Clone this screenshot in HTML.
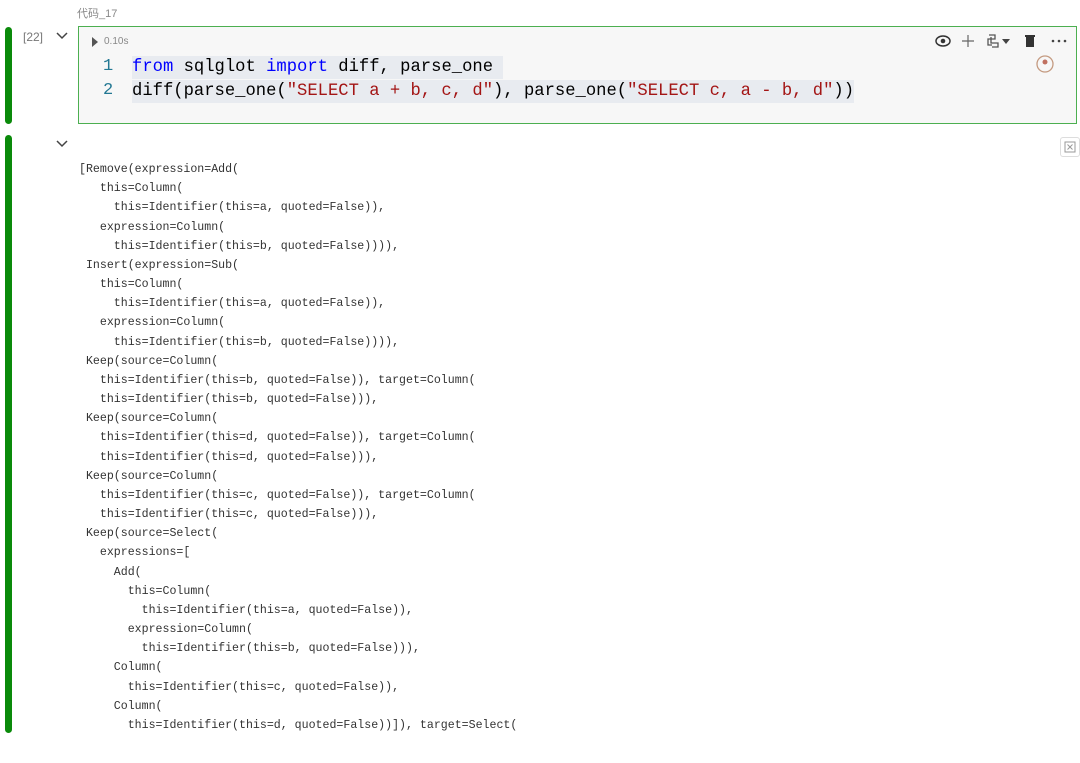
<!DOCTYPE html>
<html><head><meta charset="utf-8"><style>
body{margin:0;width:1080px;height:763px;background:#fff;position:relative;overflow:hidden;font-family:"Liberation Sans","Noto Sans CJK SC",sans-serif}
.abs{position:absolute}
.bar{position:absolute;left:5px;width:7px;background:#0a8a0a;border-radius:4px}
.code{position:absolute;left:78px;top:26px;width:997px;height:96px;border:1px solid #4caf50;background:#f7f7f7}
.ln{position:absolute;font-family:"Liberation Mono",monospace;font-size:17px;color:#237893}
.src{position:absolute;left:132px;font-family:"Liberation Mono",monospace;font-size:17.2px;color:#000;background:#e8ebf0;white-space:pre;line-height:23px}
.kw{color:#0000ff}.st{color:#a31515}
pre{position:absolute;left:79px;top:160px;margin:0;font-family:"Liberation Mono",monospace;font-size:11.6px;line-height:19.17px;color:#333}
</style></head><body>
<div class="abs" style="left:77px;top:5px;font-size:11px;color:#888">代码_17</div>
<div class="bar" style="top:27px;height:97px"></div>
<div class="bar" style="top:135px;height:598px"></div>
<div class="abs" style="left:23px;top:30px;font-size:12px;color:#777">[22]</div>
<svg class="abs" style="left:55px;top:31px" width="14" height="10"><path d="M2 2l5 5 5-5" stroke="#444" stroke-width="1.5" fill="none"/></svg>
<svg class="abs" style="left:55px;top:139px" width="14" height="10"><path d="M2 2l5 5 5-5" stroke="#444" stroke-width="1.5" fill="none"/></svg>
<div class="code"></div>
<svg class="abs" style="left:90px;top:36px" width="10" height="12"><path d="M2 1l6 5-6 5z" fill="#555"/></svg>
<div class="abs" style="left:104px;top:36px;font-size:10px;color:#888">0.10s</div>
<div class="ln" style="left:103px;top:57px">1</div>
<div class="ln" style="left:103px;top:81px">2</div>
<div class="src" style="top:56px"><span class="kw">from</span> sqlglot <span class="kw">import</span> diff, parse_one </div>
<div class="src" style="top:80px">diff(parse_one(<span class="st">"SELECT a + b, c, d"</span>), parse_one(<span class="st">"SELECT c, a - b, d"</span>))</div>
<svg class="abs" style="left:934px;top:32px" width="140" height="18">
<ellipse cx="9" cy="9" rx="7" ry="5" fill="none" stroke="#333" stroke-width="1.5"/><circle cx="9" cy="9" r="2.3" fill="#333"/>
<path d="M34 3v12M28 9h12" stroke="#666" stroke-width="1.2"/>
<path d="M55 3h6v4h-7v6h4M58 15h6v-4h-7v-6" fill="none" stroke="#555" stroke-width="1.3"/>
<path d="M68 7h8l-4 5z" fill="#444"/>
<rect x="92" y="5" width="8" height="10" fill="#333"/><rect x="91" y="3" width="10" height="2" fill="#333"/>
<circle cx="119" cy="9" r="1.3" fill="#444"/><circle cx="125" cy="9" r="1.3" fill="#444"/><circle cx="131" cy="9" r="1.3" fill="#444"/>
</svg>
<svg class="abs" style="left:1035px;top:54px" width="20" height="20"><circle cx="10" cy="10" r="8" fill="none" stroke="#c49a80" stroke-width="1.3"/><circle cx="10" cy="8" r="2.5" fill="#c07060"/></svg>
<div class="abs" style="left:1060px;top:137px;width:18px;height:18px;border:1px solid #ddd;border-radius:3px"></div>
<svg class="abs" style="left:1064px;top:141px" width="12" height="12"><rect x="1" y="1" width="10" height="10" fill="none" stroke="#999"/><path d="M3.5 3.5l5 5M8.5 3.5l-5 5" stroke="#999"/></svg>
<pre>[Remove(expression=Add(
   this=Column(
     this=Identifier(this=a, quoted=False)),
   expression=Column(
     this=Identifier(this=b, quoted=False)))),
 Insert(expression=Sub(
   this=Column(
     this=Identifier(this=a, quoted=False)),
   expression=Column(
     this=Identifier(this=b, quoted=False)))),
 Keep(source=Column(
   this=Identifier(this=b, quoted=False)), target=Column(
   this=Identifier(this=b, quoted=False))),
 Keep(source=Column(
   this=Identifier(this=d, quoted=False)), target=Column(
   this=Identifier(this=d, quoted=False))),
 Keep(source=Column(
   this=Identifier(this=c, quoted=False)), target=Column(
   this=Identifier(this=c, quoted=False))),
 Keep(source=Select(
   expressions=[
     Add(
       this=Column(
         this=Identifier(this=a, quoted=False)),
       expression=Column(
         this=Identifier(this=b, quoted=False))),
     Column(
       this=Identifier(this=c, quoted=False)),
     Column(
       this=Identifier(this=d, quoted=False))]), target=Select(</pre>
</body></html>
